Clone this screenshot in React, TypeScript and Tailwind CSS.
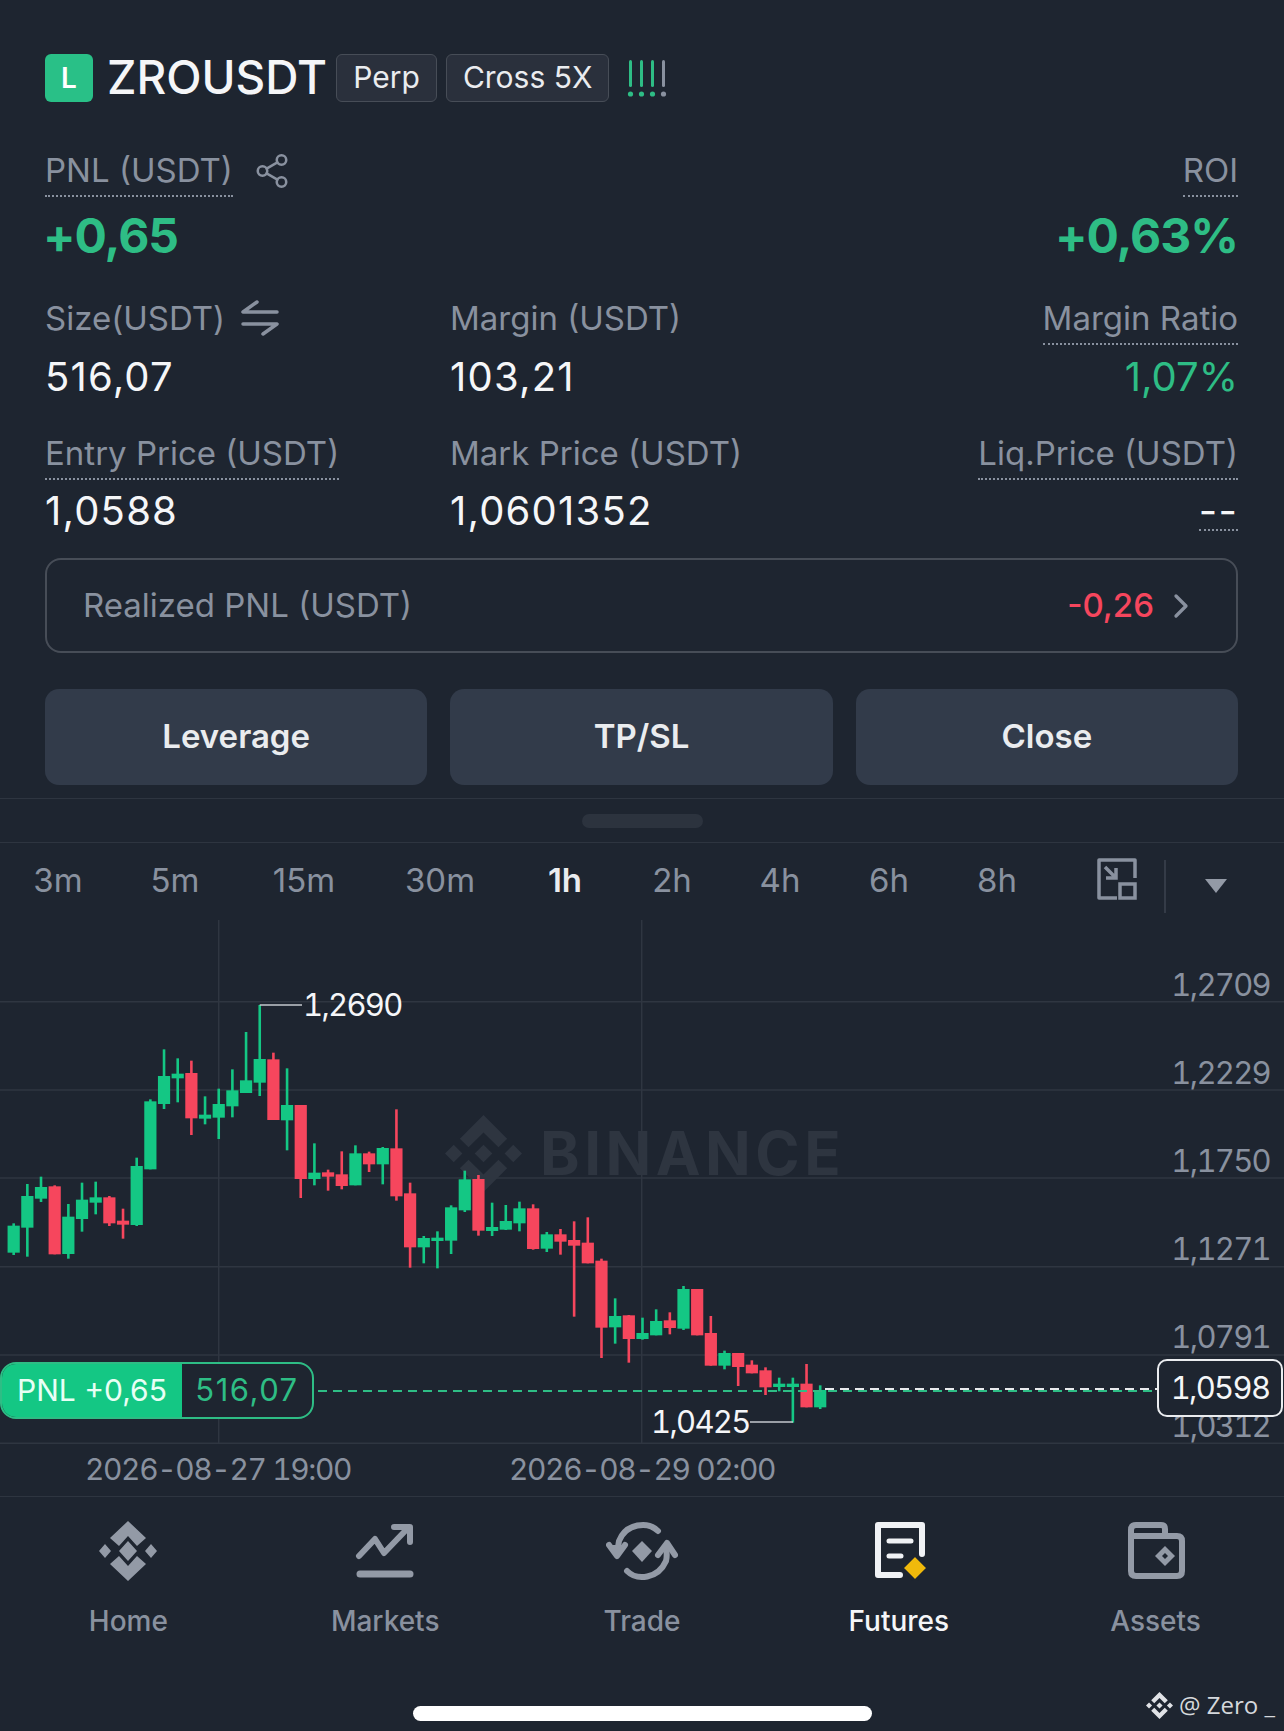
import React from 'react';
import { ChevronRight, Share2 } from 'lucide-react';

// [color, wickTop, wickBottom, bodyTop, bodyBottom] in 3x units measured from y=980
type Candle = ['g' | 'r', number, number, number, number];

const candles: Candle[] = [
  ['g', 730, 825, 737, 818], ['g', 612, 830, 648, 743], ['g', 590, 666, 621, 656], ['r', 616, 823, 619, 823],
  ['g', 672, 836, 710, 822], ['g', 608, 755, 659, 717], ['g', 605, 703, 652, 668], ['r', 648, 738, 652, 730],
  ['r', 686, 776, 722, 734], ['g', 533, 738, 558, 735], ['g', 358, 568, 364, 568], ['g', 208, 387, 288, 372],
  ['g', 235, 367, 281, 295], ['r', 242, 465, 279, 415], ['g', 349, 433, 404, 416], ['g', 326, 477, 372, 413],
  ['g', 268, 412, 331, 379], ['g', 156, 339, 301, 339], ['g', 75, 348, 237, 308], ['r', 218, 420, 238, 420],
  ['g', 265, 511, 375, 421], ['r', 375, 654, 375, 597], ['g', 490, 616, 578, 597], ['r', 569, 632, 577, 590],
  ['r', 514, 628, 583, 618], ['g', 496, 616, 520, 616], ['r', 515, 576, 520, 553], ['g', 501, 613, 504, 553],
  ['r', 388, 662, 505, 649], ['r', 608, 863, 640, 802], ['g', 768, 850, 774, 802], ['g', 754, 865, 773, 783],
  ['g', 676, 822, 682, 782], ['g', 572, 696, 598, 691], ['r', 585, 767, 597, 752], ['g', 668, 768, 741, 753],
  ['g', 675, 750, 723, 749], ['g', 665, 754, 685, 730], ['r', 673, 809, 685, 807], ['g', 756, 816, 763, 806],
  ['r', 747, 824, 763, 785], ['r', 724, 1010, 780, 797], ['r', 712, 850, 788, 850], ['r', 836, 1134, 842, 1043],
  ['g', 955, 1091, 1008, 1042], ['r', 1005, 1148, 1006, 1077], ['g', 1013, 1079, 1059, 1077], ['g', 988, 1066, 1023, 1066],
  ['r', 997, 1063, 1021, 1044], ['g', 918, 1050, 927, 1046], ['r', 927, 1066, 927, 1066], ['r', 1008, 1157, 1059, 1157],
  ['g', 1112, 1168, 1119, 1157], ['r', 1119, 1218, 1119, 1161], ['r', 1141, 1180, 1154, 1180], ['r', 1162, 1245, 1171, 1222],
  ['g', 1193, 1234, 1211, 1221], ['g', 1193, 1328, 1211, 1221], ['r', 1152, 1282, 1211, 1282], ['g', 1216, 1287, 1230, 1282],
];

const gridLines = [1001.7, 1090, 1178, 1266.7, 1355, 1443.3];
const priceLabels = [
  { label: '1,2709', cls: 'top-[47px]' },
  { label: '1,2229', cls: 'top-[135px]' },
  { label: '1,1750', cls: 'top-[223px]' },
  { label: '1,1271', cls: 'top-[311px]' },
  { label: '1,0791', cls: 'top-[399px]' },
  { label: '1,0312', cls: 'top-[488px]' },
];
const intervals = [
  { label: '3m', cls: 'left-[58px]' },
  { label: '5m', cls: 'left-[175px]' },
  { label: '15m', cls: 'left-[304px]' },
  { label: '30m', cls: 'left-[440px]' },
  { label: '1h', cls: 'left-[565px] text-[#eaecef] font-semibold' },
  { label: '2h', cls: 'left-[672px]' },
  { label: '4h', cls: 'left-[780px]' },
  { label: '6h', cls: 'left-[889px]' },
  { label: '8h', cls: 'left-[997px]' },
];

const BINANCE_LOGO =
  'M38.73 53.2l24.59-24.58 24.6 24.6 14.3-14.31L63.32 0 24.42 38.9l14.31 14.3zM0 63.31l14.3-14.31 14.31 14.31-14.31 14.3zM38.73 73.41l24.59 24.59 24.6-24.6 14.31 14.29-38.9 38.91-38.91-38.88-.02-.02 14.33-14.29zM97.99 63.31l14.3-14.31 14.32 14.31-14.31 14.3zM77.83 63.3h.01L63.32 48.78 52.59 59.51l-1.24 1.23-2.54 2.54 14.51 14.51 14.5-14.49.01-.01-.01-.01z';

function Label({ children, dotted }: { children: React.ReactNode; dotted?: boolean }) {
  return (
    <span className={`inline-block h-[45px] text-[33px] leading-[36px] whitespace-nowrap text-[#89919f] ${dotted ? 'border-b-2 border-dotted border-[#89919f]' : ''}`}>
      {children}
    </span>
  );
}

function Value({ children, green }: { children: React.ReactNode; green?: boolean }) {
  return (
    <div className={`text-[40px] leading-[44px] ${green ? 'text-[#2ebd85]' : 'tracking-[1.2px] text-[#f5f6f8]'}`}>{children}</div>
  );
}

function HomeIcon() {
  return (
    <svg width="60" height="60" viewBox="0 0 60 60" fill="#939aa6">
      <path d="M30 0 48 17 39 25 30 15 21 25 12 17Z" />
      <path d="M30 60 48 43 39 35 30 45 21 35 12 43Z" />
      <path d="M7 23 13 30 7 37 1 30ZM30 20 39 30 30 40 21 30ZM53 23 59 30 53 37 47 30Z" />
    </svg>
  );
}

function MarketsIcon() {
  return (
    <svg width="60" height="60" viewBox="0 0 60 60" fill="none" stroke="#939aa6" strokeWidth="6" strokeLinecap="round" strokeLinejoin="round">
      <path d="M4 35 20 18 29 32 52 8" />
      <path d="M39 6H55V21" />
      <path d="M5 53H55" strokeWidth="7" />
    </svg>
  );
}

function TradeIcon() {
  return (
    <svg width="72" height="60" viewBox="0 0 72 60" fill="none" stroke="#939aa6" strokeWidth="6" strokeLinecap="round" strokeLinejoin="round">
      <path d="M52 10C42 0 20 2 13 20 12 24 12 28 12 31" />
      <path d="M3 24 11 35 19 24" fill="#939aa6" />
      <path d="M21 50C31 60 52 58 60 40 61 36 61 32 60 27" />
      <path d="M52 34 61 22 69 34" />
      <path d="M36 20 46 30 36 41 26 30Z" fill="#939aa6" stroke="none" />
    </svg>
  );
}

function FuturesIcon() {
  return (
    <svg width="60" height="60" viewBox="0 0 60 60" fill="none" stroke="#f0f2f5" strokeWidth="6" strokeLinecap="round" strokeLinejoin="round">
      <path d="M53 33V4H9V54H31" />
      <path d="M20 20H42M20 35H32" strokeWidth="5" />
      <path d="M46 34 59 47 46 60 33 47Z" fill="#f0b90b" stroke="#1e2530" strokeWidth="3" />
    </svg>
  );
}

function AssetsIcon() {
  return (
    <svg width="60" height="60" viewBox="0 0 60 60" fill="none" stroke="#939aa6" strokeWidth="6" strokeLinejoin="round">
      <path d="M5 15V9Q5 4 10 4H35Q39 4 39 8V15" />
      <path d="M5 15H51Q56 15 56 20V50Q56 55 51 55H10Q5 55 5 50Z" />
      <path d="M39 25 49 35 39 45 29 35Z" fill="#939aa6" stroke="none" />
      <path d="M39 32 42 35 39 38 36 35Z" fill="#1e2530" stroke="none" />
    </svg>
  );
}

function SwapIcon() {
  return (
    <svg width="38" height="36" viewBox="0 0 38 36" fill="none" stroke="#89919f" strokeWidth="3.5" strokeLinecap="round" strokeLinejoin="round">
      <path d="M16 2 2 12H36" />
      <path d="M22 34 36 24H2" />
    </svg>
  );
}

export default function App() {
  const navItems = [
    { label: 'Home', icon: <HomeIcon /> },
    { label: 'Markets', icon: <MarketsIcon /> },
    { label: 'Trade', icon: <TradeIcon /> },
    { label: 'Futures', icon: <FuturesIcon />, active: true },
    { label: 'Assets', icon: <AssetsIcon /> },
  ];

  return (
    <div className="relative w-[1284px] h-[1731px] overflow-hidden bg-[#1e2530] font-['Inter',sans-serif]">
      {/* position summary */}
      <div className="pl-[45px] pr-[46px] pt-[53px]">
        <div className="flex items-center h-[49px]">
          <div className="flex items-center justify-center w-[48px] h-[48px] rounded-[6px] bg-[#29c087] text-[28px] font-semibold text-white">L</div>
          <span className="ml-[14px] text-[46px] font-medium text-[#f5f6f8]">ZROUSDT</span>
          <span className="ml-[9px] flex items-center justify-center w-[101px] h-[48px] rounded-[6px] border border-[#474d57] bg-[#2a303c] text-[30px] text-[#eaecef]">Perp</span>
          <span className="ml-[9px] flex items-center justify-center w-[163px] h-[48px] rounded-[6px] border border-[#474d57] bg-[#2a303c] text-[30px] text-[#eaecef]">Cross 5X</span>
          <svg width="40" height="40" viewBox="0 0 40 40" className="ml-[18px]">
            <g fill="#2ebd85">
              <rect x="2" y="2" width="3" height="27" rx="1.5" /><circle cx="3.5" cy="36" r="2.6" />
              <rect x="13" y="2" width="3" height="27" rx="1.5" /><circle cx="14.5" cy="36" r="2.6" />
              <rect x="24" y="2" width="3" height="27" rx="1.5" /><circle cx="25.5" cy="36" r="2.6" />
            </g>
            <g fill="#89919f">
              <rect x="35" y="2" width="3" height="27" rx="1.5" /><circle cx="36.5" cy="36" r="2.6" />
            </g>
          </svg>
        </div>

        <div className="flex justify-between mt-[50px]">
          <div>
            <div className="flex items-start">
              <Label dotted>PNL (USDT)</Label>
              <Share2 size={38} strokeWidth={1.6} className="ml-[20px] text-[#89919f]" />
            </div>
            <div className="-ml-[2px] mt-[11px] text-[48px] leading-[56px] font-bold tracking-[-1px] text-[#2ebd85]">+0,65</div>
          </div>
          <div className="flex flex-col items-end">
            <Label dotted>ROI</Label>
            <div className="mt-[11px] text-[48px] leading-[56px] font-bold tracking-[-1px] text-[#2ebd85]">+0,63%</div>
          </div>
        </div>

        <div className="grid grid-cols-[405px_1fr_auto] mt-[36px]">
          <div>
            <div className="flex items-start">
              <Label>Size(USDT)</Label>
              <span className="ml-[16px]"><SwapIcon /></span>
            </div>
            <div className="mt-[10px]"><Value>516,07</Value></div>
          </div>
          <div>
            <Label>Margin (USDT)</Label>
            <div className="mt-[10px]"><Value>103,21</Value></div>
          </div>
          <div className="flex flex-col items-end">
            <Label dotted>Margin Ratio</Label>
            <div className="mt-[10px]"><Value green>1,07%</Value></div>
          </div>
        </div>

        <div className="grid grid-cols-[405px_1fr_auto] mt-[36px]">
          <div>
            <Label dotted>Entry Price (USDT)</Label>
            <div className="mt-[9px]"><Value>1,0588</Value></div>
          </div>
          <div>
            <Label>Mark Price (USDT)</Label>
            <div className="mt-[9px]"><Value>1,0601352</Value></div>
          </div>
          <div className="flex flex-col items-end">
            <Label dotted>Liq.Price (USDT)</Label>
            <div className="mt-[9px] h-[42px] border-b-2 border-dotted border-[#89919f]"><Value>--</Value></div>
          </div>
        </div>

        <div className="flex items-center justify-between h-[95px] mt-[25px] pl-[36px] pr-[35px] rounded-[16px] border-2 border-[#474d57]">
          <span className="text-[33px] text-[#89919f]">Realized PNL (USDT)</span>
          <div className="flex items-center gap-[7px]">
            <span className="text-[33px] font-medium text-[#f6465d]">-0,26</span>
            <ChevronRight size={40} strokeWidth={2} className="text-[#89919f]" />
          </div>
        </div>

        <div className="grid grid-cols-3 gap-[23px] mt-[36px]">
          {['Leverage', 'TP/SL', 'Close'].map(label => (
            <button key={label} className="h-[96px] rounded-[14px] bg-[#323b4a] text-[33px] font-semibold text-[#eaecef]">{label}</button>
          ))}
        </div>
      </div>

      {/* drag handle */}
      <div className="flex items-center justify-center h-[45px] mt-[13px] border-y border-[#2e3540]">
        <div className="w-[121px] h-[14px] rounded-full bg-[#2c333e]" />
      </div>

      {/* interval tabs */}
      <div className="relative h-[77px] text-[33px] text-[#89919f]">
        {intervals.map(t => (
          <span key={t.label} className={`absolute top-[13px] -translate-x-1/2 ${t.cls}`}>{t.label}</span>
        ))}
        <svg width="42" height="42" viewBox="0 0 42 42" fill="none" stroke="#89919f" strokeWidth="3.5" className="absolute left-[1096px] top-[15px]">
          <path d="M21 40H3V2H39V20" strokeLinejoin="round" />
          <path d="M9 9 19 19M20 10V20H10" />
          <rect x="24" y="26" width="15" height="14" />
        </svg>
        <div className="absolute left-[1164px] top-[17px] w-[2px] h-[53px] bg-[#343b47]" />
        <div className="absolute left-[1205px] top-[36px] w-0 h-0 border-x-[11px] border-x-transparent border-t-[14px] border-t-[#939aa6]" />
      </div>

      {/* chart canvas */}
      <div className="relative h-[577px] border-b border-[#2e3540]">
        <svg width="1284" height="577" viewBox="0 0 1284 577" className="absolute left-0 top-0">
          {gridLines.map(y => (
            <line key={y} x1="0" x2="1284" y1={y - 920} y2={y - 920} stroke="#2f3641" strokeWidth="1.5" />
          ))}
          {[218.7, 641.7].map(x => (
            <line key={x} x1={x} x2={x} y1="0" y2="523" stroke="#2f3641" strokeWidth="1.5" />
          ))}
          <svg x="445" y="195" width="77" height="77" viewBox="0 0 126.61 126.61" fill="#2e3540">
            <path d={BINANCE_LOGO} />
          </svg>
          {candles.map(([c, wt, wb, bt, bb], i) => {
            const x = 13.67 * (i + 1);
            const fill = c === 'g' ? '#14c784' : '#f6465d';
            return (
              <g key={i} fill={fill}>
                <rect x={x - 1.3} y={60 + wt / 3} width="2.6" height={(wb - wt) / 3} />
                <rect x={x - 6.1} y={60 + bt / 3} width="12.2" height={Math.max((bb - bt) / 3, 2)} />
              </g>
            );
          })}
          <path d="M259.7 85H302" stroke="#c5c8ce" strokeWidth="1.5" fill="none" />
          <path d="M750 502H793" stroke="#c5c8ce" strokeWidth="1.5" fill="none" />
          <line x1="318" x2="1157" y1="471" y2="471" stroke="#2ebd85" strokeWidth="2" strokeDasharray="9 6" />
          <line x1="825" x2="1157" y1="469" y2="469" stroke="#e8eaed" strokeWidth="2" strokeDasharray="9 6" />
        </svg>

        <span className="absolute left-[540px] top-[203px] text-[60px] leading-[60px] font-bold tracking-[4.5px] text-[#2e3540]">BINANCE</span>

        {priceLabels.map(p => (
          <span key={p.label} className={`absolute right-[14px] text-[31px] leading-[36px] tabular-nums tracking-[-1.7px] text-[#89919f] ${p.cls}`}>{p.label}</span>
        ))}

        <span className="absolute left-[303px] top-[67px] text-[31px] leading-[36px] tabular-nums tracking-[-1.7px] text-[#f5f6f8]">1,2690</span>
        <span className="absolute left-[651px] top-[484px] text-[31px] leading-[36px] tabular-nums tracking-[-1.7px] text-[#f5f6f8]">1,0425</span>

        <div className="absolute left-0 top-[442px] flex w-[314px] h-[57px] rounded-[16px] border-2 border-[#2ebd85] bg-[#1e2530] overflow-hidden">
          <span className="flex items-center justify-center w-[180px] bg-[#14c784] text-[30px] text-[#e8fff5]">PNL +0,65</span>
          <span className="flex items-center justify-center flex-1 text-[31px] tracking-[1.5px] text-[#2ebd85]">516,07</span>
        </div>

        <div className="absolute left-[1157px] top-[439px] flex items-center justify-center w-[126px] h-[58px] rounded-[10px] border-2 border-[#eaecef] bg-[#1e2530] text-[31px] tabular-nums tracking-[-1.7px] text-[#f5f6f8]">1,0598</div>

        <span className="absolute left-[218px] top-[531px] -translate-x-1/2 whitespace-nowrap text-[30px] leading-[36px] tabular-nums tracking-[-1.4px] text-[#89919f]">2026-08-27 19:00</span>
        <span className="absolute left-[642px] top-[531px] -translate-x-1/2 whitespace-nowrap text-[30px] leading-[36px] tabular-nums tracking-[-1.4px] text-[#89919f]">2026-08-29 02:00</span>
      </div>

      {/* bottom nav */}
      <nav className="grid grid-cols-5 pt-[24px]">
        {navItems.map(item => (
          <div key={item.label} className="flex flex-col items-center">
            <div className="flex items-center justify-center h-[60px]">{item.icon}</div>
            <span className={`mt-[22px] text-[28px] leading-[36px] font-medium ${item.active ? 'text-[#f5f6f8]' : 'text-[#89919f]'}`}>{item.label}</span>
          </div>
        ))}
      </nav>

      <div className="absolute left-[413px] top-[1706px] w-[459px] h-[15px] rounded-full bg-white" />

      <div className="absolute right-[9px] top-[1691px] flex items-center gap-[6px] font-['Open_Sans',sans-serif] text-[24px] leading-[28px] text-[#d5d8dc]">
        <svg width="27" height="27" viewBox="0 0 126.61 126.61" fill="#e0e2e6"><path d={BINANCE_LOGO} /></svg>
        <span>@ Zero _</span>
      </div>
    </div>
  );
}
